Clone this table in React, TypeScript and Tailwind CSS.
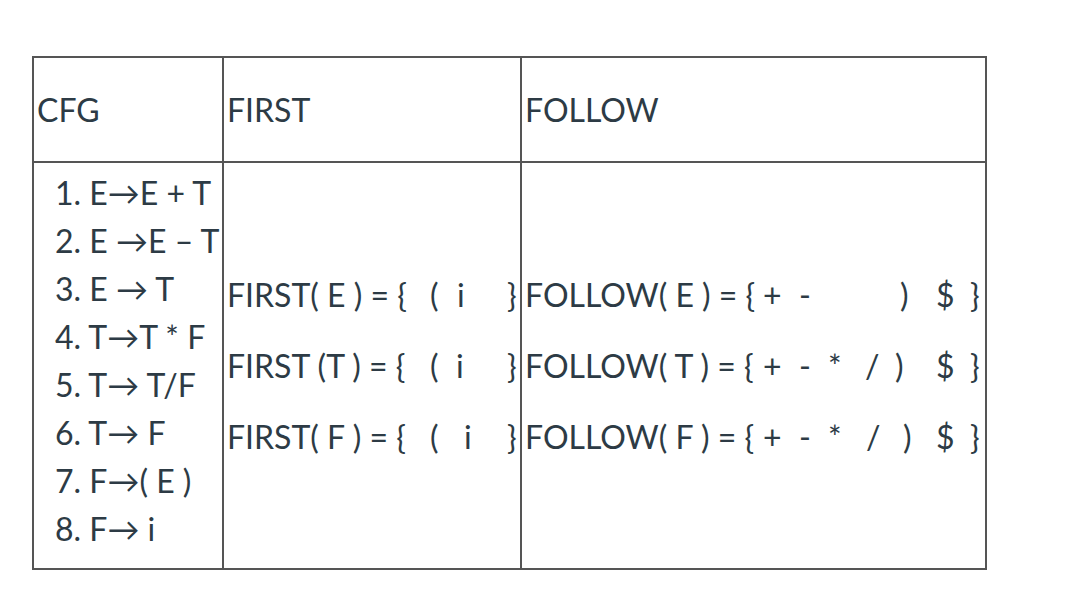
const cfg = [
  '1. E→E + T',
  '2. E →E – T',
  '3. E → T',
  '4. T→T * F',
  '5. T→ T/F',
  '6. T→ F',
  '7. F→( E )',
  '8. F→ i',
];

// each token: [text, width of its slot in px]; last token has no width
type Tok = [string, number?];

const firstRows: Tok[][] = [
  [['FIRST( E ) = {', 203], ['(', 27], ['i', 50], ['}']],
  [['FIRST (T ) = {', 203], ['(', 26], ['i', 51], ['}']],
  [['FIRST( F ) = {', 203], ['(', 34], ['i', 43], ['}']],
];

const followRows: Tok[][] = [
  [['FOLLOW( E ) = {', 238], ['+', 36], ['-', 101], [')', 36], ['$', 34], ['}']],
  [['FOLLOW( T ) = {', 238], ['+', 36], ['-', 29], ['*', 37], ['/', 30], [')', 41], ['$', 34], ['}']],
  [['FOLLOW( F ) = {', 238], ['+', 36], ['-', 29], ['*', 38], ['/', 37], [')', 33], ['$', 34], ['}']],
];

const Line = ({ toks }: { toks: Tok[] }) => (
  <div className="flex whitespace-nowrap">
    {toks.map(([t, w], i) => (
      <span key={i} className="inline-block shrink-0" style={w ? { width: w } : undefined}>
        {t}
      </span>
    ))}
  </div>
);

const App = () => {
  return (
    <div className="min-h-screen bg-white pt-[56px] pl-[32px] font-['Lato','Open_Sans',sans-serif] text-[32px] leading-[48px] text-[#2d3b45]">
      <div className="grid w-fit grid-cols-[190px_298px_465px] border-t-2 border-l-2 border-[#555]">
        {/* header */}
        <div className="flex h-[105px] items-center border-r-2 border-b-2 border-[#555] pl-[3px]">CFG</div>
        <div className="flex h-[105px] items-center border-r-2 border-b-2 border-[#555] pl-[3px]">FIRST</div>
        <div className="flex h-[105px] items-center border-r-2 border-b-2 border-[#555] pl-[3px]">FOLLOW</div>

        {/* body */}
        <div className="h-[407px] border-r-2 border-b-2 border-[#555] pt-[6px] pl-[21px]">
          {cfg.map((c) => (
            <div key={c} className="whitespace-nowrap">{c}</div>
          ))}
        </div>
        <div className="flex h-[407px] flex-col justify-center gap-[23px] border-r-2 border-b-2 border-[#555] pl-[3px]">
          {firstRows.map((r, i) => (
            <Line key={i} toks={r} />
          ))}
        </div>
        <div className="flex h-[407px] flex-col justify-center gap-[23px] border-r-2 border-b-2 border-[#555] pl-[3px]">
          {followRows.map((r, i) => (
            <Line key={i} toks={r} />
          ))}
        </div>
      </div>
    </div>
  );
};

export default App;
